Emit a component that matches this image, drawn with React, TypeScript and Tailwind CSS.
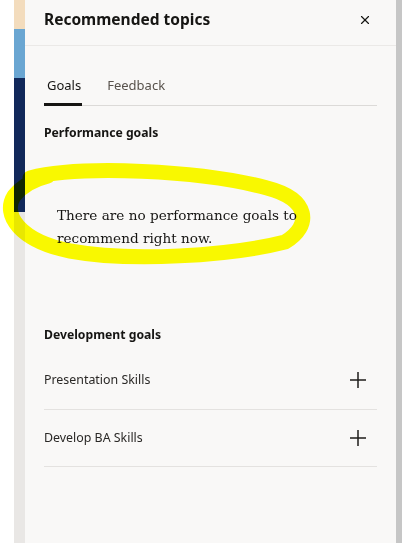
import { X } from "lucide-react";

const sans = "font-['Noto_Sans','Open_Sans',sans-serif]";

function GoalRow({ title }: { title: string }) {
  return (
    <div className="flex h-[57.5px] items-center justify-between border-b border-[#e4e2e0] pr-[10px]">
      <span className="text-[12.4px] text-[#2a2826]">{title}</span>
      <svg width="18" height="18" viewBox="0 0 18 18" className="text-[#1f1d1b]">
        <path d="M9 1v16M1 9h16" stroke="currentColor" strokeWidth="1.5" fill="none" />
      </svg>
    </div>
  );
}

export default function App() {
  return (
    <div className={`relative flex h-[543px] w-[402px] overflow-hidden bg-white ${sans}`}>
      <div className="w-[14px] bg-white" />
      <div className="flex w-[11px] flex-col bg-[#e9e7e5]">
        <div className="h-[29px] bg-[#f3dcbd]" />
        <div className="h-[49px] bg-[#6aa6d2]" />
        <div className="h-[134px] bg-[#11285a]" />
      </div>

      <div className="flex flex-1 flex-col bg-[#f9f8f7]">
        <div className="flex h-[46px] items-center justify-between border-b border-[#ebe9e7] pb-[6px] pl-[19px] pr-[24px]">
          <h1 className="text-[15.5px] font-bold text-[#161513]">Recommended topics</h1>
          <X className="h-[14px] w-[14px] text-[#161513]" strokeWidth={2} />
        </div>

        <div className="px-[19px]">
          <div className="mt-[30px] flex border-b border-[#dcdad8]">
            <div className="relative px-[3px] pb-[9px] text-[13px] text-[#161513]">
              Goals
              <div className="absolute bottom-[-1px] left-0 h-[3px] w-[38px] bg-[#161513]" />
            </div>
            <div className="ml-[23px] pb-[9px] text-[13px] text-[#58524c]">Feedback</div>
          </div>

          <h2 className="mt-[18px] text-[12.2px] font-bold text-[#161513]">Performance goals</h2>

          <p className="mt-[62px] pl-[13px] font-['DejaVu_Serif',serif] text-[13.6px] leading-[23px] text-[#161513]">
            There are no performance goals to
            <br />
            recommend right now.
          </p>

          <h2 className="mt-[76px] text-[12.2px] font-bold text-[#161513]">Development goals</h2>

          <div className="mt-[8px]">
            <GoalRow title="Presentation Skills" />
            <GoalRow title="Develop BA Skills" />
          </div>
        </div>
      </div>

      <div className="w-[6px] bg-[#c6c6c6]" />

      {/* highlighter annotation */}
      <svg
        className="pointer-events-none absolute left-0 top-0 mix-blend-multiply"
        width="402"
        height="543"
        viewBox="0 0 402 543"
      >
        <path
          d="M30 178 C80 165 200 170 267 188 C310 199 312 226 285 242 C230 256 130 262 70 251 C20 241 2 215 14 196 C22 186 32 180 48 176"
          stroke="#ffff00"
          strokeWidth="15"
          fill="none"
          strokeLinecap="round"
        />
      </svg>
    </div>
  );
}
